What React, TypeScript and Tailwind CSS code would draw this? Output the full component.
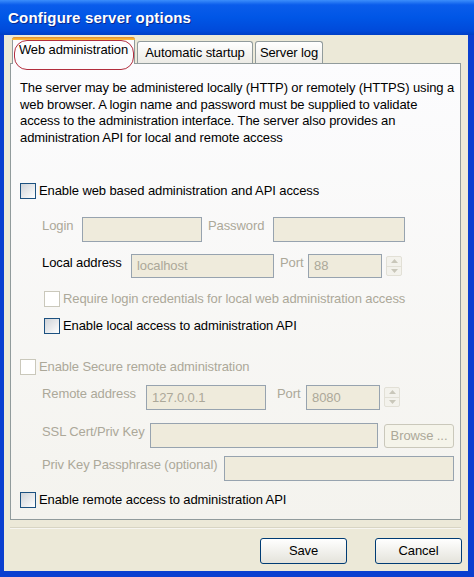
import React from "react"

function Checkbox({ disabled = false }: { disabled?: boolean }) {
  return (
    <span
      className={
        disabled
          ? "block w-[16px] h-[16px] shrink-0 border border-[#CAC8BB] bg-white"
          : "block w-[16px] h-[16px] shrink-0 border border-[#1C5180] bg-linear-to-br from-[#CFD3D8] to-white"
      }
    />
  )
}

function CheckRow({
  label,
  disabled = false,
  indent = false,
  className = "",
}: {
  label: string
  disabled?: boolean
  indent?: boolean
  className?: string
}) {
  return (
    <div
      className={`flex items-center h-[18px] gap-[3px] ${
        indent ? "ml-[33px]" : "ml-[9px]"
      } ${className}`}
    >
      <Checkbox disabled={disabled} />
      <span className={disabled ? "text-[#ACA899]" : "text-black"}>{label}</span>
    </div>
  )
}

function Field({
  width,
  value,
  className = "",
}: {
  width: string
  value?: string
  className?: string
}) {
  return (
    <div
      className={`${width} h-full border border-[#97A3AF] bg-[#EFEBDC] flex items-center pl-[5px] text-[#ACA899] ${className}`}
    >
      {value}
    </div>
  )
}

function Spinner() {
  return (
    <div className="ml-[4px] mt-[2px] w-[16px] h-[20px] flex flex-col border border-[#E2E0D6] rounded-[2px] bg-[#F3F2EC]">
      <div className="flex-1 flex items-center justify-center border-b border-[#E2E0D6]">
        <svg width="7" height="4" viewBox="0 0 7 4">
          <path d="M0 4 L3.5 0 L7 4 Z" fill="#C9C7BA" />
        </svg>
      </div>
      <div className="flex-1 flex items-center justify-center">
        <svg width="7" height="4" viewBox="0 0 7 4">
          <path d="M0 0 L3.5 4 L7 0 Z" fill="#C9C7BA" />
        </svg>
      </div>
    </div>
  )
}

export default function App() {
  return (
    <div className="w-[474px] h-[577px] flex flex-col font-['Liberation_Sans',Arial,sans-serif] text-[13px] leading-[16px] tracking-[-0.1px] select-none">
      {/* title bar */}
      <div className="h-[35px] shrink-0 flex items-center pl-[8px] bg-[linear-gradient(to_bottom,#3C8EFB_0%,#0A5CEB_14%,#0056E6_50%,#004ADA_88%,#003FC6_100%)]">
        <span className="text-white font-bold text-[15px] tracking-[0.2px] [text-shadow:1px_1px_0_#0B2A8E]">
          Configure server options
        </span>
      </div>

      {/* body */}
      <div className="relative flex-1 flex flex-col bg-[#ECE9D8] border-l-[4px] border-r-[6px] border-b-[6px] border-[#0A3FD0] pl-[6px] pr-[7px] pt-[2px]">
        {/* tabs */}
        <div className="h-[26px] flex items-end">
          <div className="relative z-10 ml-[2px] w-[123px] h-[27px] -mb-px bg-[#FCFCFE] border border-b-0 border-[#919B9C] rounded-t-[3px] flex items-center justify-center pb-[2px]">
            <div className="absolute -top-px -left-px -right-px h-[3px] rounded-t-[3px] bg-linear-to-b from-[#E68B2C] to-[#FFC73C]" />
            <span>Web administration</span>
          </div>
          <div className="ml-[2px] w-[116px] h-[22px] bg-linear-to-b from-white to-[#ECEBE6] border border-b-0 border-[#919B9C] rounded-t-[3px] flex items-center justify-center">
            Automatic startup
          </div>
          <div className="ml-[2px] w-[68px] h-[22px] bg-linear-to-b from-white to-[#ECEBE6] border border-b-0 border-[#919B9C] rounded-t-[3px] flex items-center justify-center">
            Server log
          </div>
        </div>

        {/* annotation ring around active tab */}
        <div className="absolute left-[10px] top-[5px] w-[120px] h-[30px] border-[1.5px] border-[#B22E3E] rounded-[13px] z-20 pointer-events-none" />

        {/* panel */}
        <div className="h-[457px] border border-[#919B9C] bg-linear-to-b from-[#FCFCFE] to-[#F4F3EE] flex flex-col">
          <p className="mt-[16px] ml-[9px] leading-[16.5px] text-black whitespace-nowrap">
            The server may be administered locally (HTTP) or remotely (HTTPS) using a
            <br />
            web browser. A login name and password must be supplied to validate
            <br />
            access to the administration interface. The server also provides an
            <br />
            administration API for local and remote access
          </p>

          <CheckRow className="mt-[36px]" label="Enable web based administration and API access" />

          <div className="mt-[17px] h-[25px] flex items-start ml-[31px] text-[#ACA899]">
            <span className="w-[40px] pt-[1px]">Login</span>
            <Field width="w-[120px]" />
            <span className="ml-[6px] w-[65px] pt-[1px]">Password</span>
            <Field width="w-[132px]" />
          </div>

          <div className="mt-[12px] h-[24px] flex items-start ml-[31px]">
            <span className="w-[89px] pt-[1px] text-black">Local address</span>
            <Field width="w-[143px]" value="localhost" />
            <span className="ml-[6px] w-[28px] pt-[1px] text-[#ACA899]">Port</span>
            <Field width="w-[74px]" value="88" />
            <Spinner />
          </div>

          <CheckRow
            className="mt-[12px]"
            indent
            disabled
            label="Require login credentials for local web administration access"
          />
          <CheckRow className="mt-[9px]" indent label="Enable local access to administration API" />

          <CheckRow className="mt-[23px]" disabled label="Enable Secure remote administration" />

          <div className="mt-[9px] h-[25px] flex items-start ml-[31px] text-[#ACA899]">
            <span className="w-[104px] pt-[1px]">Remote address</span>
            <Field width="w-[120px]" value="127.0.0.1" />
            <span className="ml-[11px] w-[29px] pt-[1px]">Port</span>
            <Field width="w-[74px]" value="8080" />
            <Spinner />
          </div>

          <div className="mt-[13px] h-[25px] flex items-start ml-[31px] text-[#ACA899]">
            <span className="w-[108px] pt-[1px]">SSL Cert/Priv Key</span>
            <Field width="w-[228px]" />
            <div className="ml-[6px] mt-[1px] w-[70px] h-[24px] border border-[#CAC8BB] rounded-[3px] bg-[#F5F4EA] flex items-center justify-center">
              Browse ...
            </div>
          </div>

          <div className="mt-[8px] h-[25px] flex items-start ml-[31px] text-[#ACA899]">
            <span className="w-[182px] pt-[1px]">Priv Key Passphrase (optional)</span>
            <Field width="w-[230px]" />
          </div>

          <CheckRow className="mt-[10px]" label="Enable remote access to administration API" />
        </div>

        {/* separator */}
        <div className="mt-[7px] h-[2px] border-t border-[#D8D5C4] border-b border-b-[#F7F6F0]" />

        {/* buttons */}
        <div className="mt-[9px] flex justify-end gap-[28px] -mr-[1px]">
          <button className="w-[87px] h-[26px] border border-[#003C74] rounded-[3px] bg-linear-to-b from-white to-[#E4E3DB] text-black">
            Save
          </button>
          <button className="w-[87px] h-[26px] border border-[#003C74] rounded-[3px] bg-linear-to-b from-white to-[#E4E3DB] text-black">
            Cancel
          </button>
        </div>
      </div>
    </div>
  )
}
